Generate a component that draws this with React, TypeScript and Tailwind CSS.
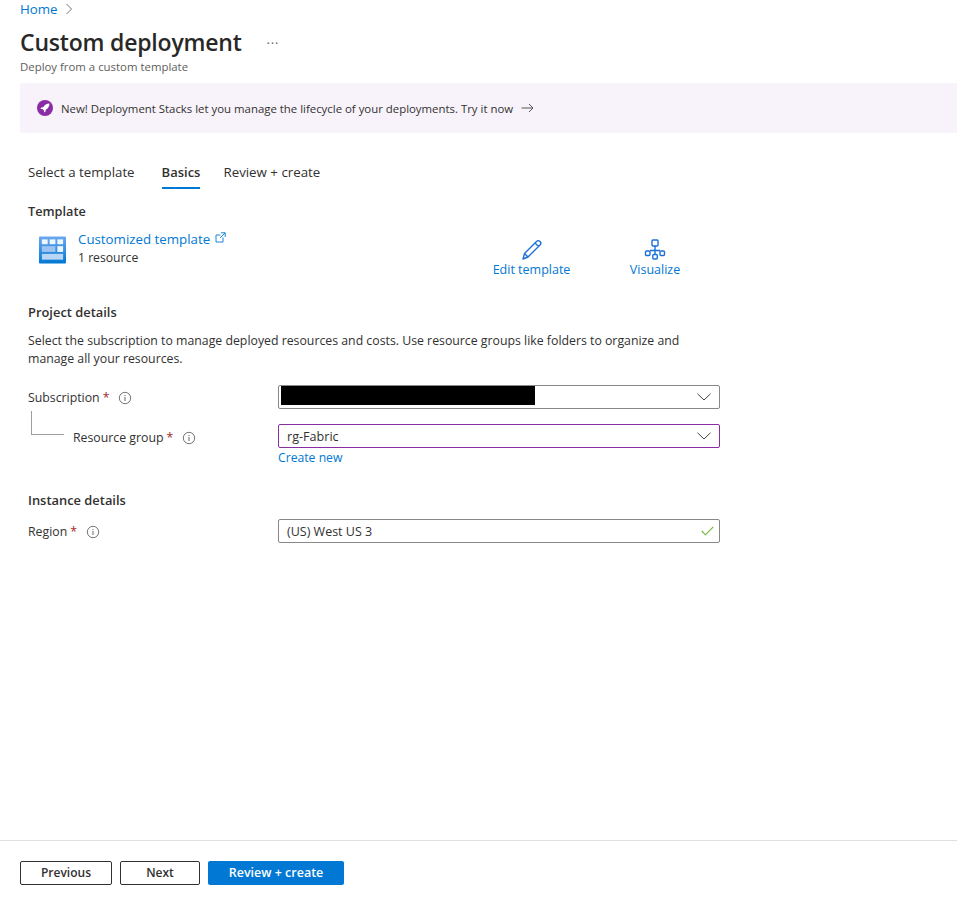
import React from 'react';

const font = { fontFamily: '"Open Sans", "Noto Sans", sans-serif' };

const InfoIcon = () => (
  <svg width="14" height="14" viewBox="0 0 14 14" fill="none">
    <circle cx="7" cy="7" r="5.7" stroke="#777" strokeWidth="1" />
    <rect x="6.5" y="6" width="1" height="4" fill="#666" />
    <rect x="6.5" y="4" width="1" height="1" fill="#666" />
  </svg>
);

const Chevron = () => (
  <svg width="14" height="8" viewBox="0 0 14 8" fill="none">
    <path d="M0.5 0.8 L7 7 L13.5 0.8" stroke="#444" strokeWidth="1" />
  </svg>
);

const Required = () => <span className="text-[#a4262c] ml-[3px]">*</span>;

const TemplateIcon = () => (
  <svg width="27" height="28" viewBox="0 0 28 28">
    <defs>
      <linearGradient id="tpl" x1="0" y1="0" x2="0" y2="1">
        <stop offset="0" stopColor="#6aa9f0" />
        <stop offset="1" stopColor="#0078d4" />
      </linearGradient>
    </defs>
    <rect x="0" y="0" width="28" height="28" rx="1" fill="url(#tpl)" />
    <rect x="3" y="3" width="6" height="5" fill="#fff" opacity="0.9" />
    <rect x="11" y="3" width="6" height="5" fill="#fff" opacity="0.9" />
    <rect x="19" y="3" width="6" height="5" fill="#fff" opacity="0.9" />
    <rect x="3" y="10" width="14" height="6" fill="#9cc3f2" />
    <rect x="19" y="10" width="6" height="6" fill="#fff" opacity="0.9" />
    <rect x="3" y="18" width="22" height="6" fill="#b9d6f5" />
  </svg>
);

const App: React.FC = () => {
  return (
    <div className="h-[900px] w-[957px] flex flex-col bg-white text-[#323130] text-[12.3px] overflow-hidden" style={font}>
      {/* Header */}
      <div className="pl-5 h-[18px] flex items-center gap-[7px]">
        <a className="text-[#0078d4] text-[13.3px] leading-[18px]">Home</a>
        <svg width="8" height="12" viewBox="0 0 8 12" fill="none">
          <path d="M1.5 1 L6.5 6 L1.5 11" stroke="#777" strokeWidth="1" />
        </svg>
      </div>
      <div className="pl-5 mt-[7px] flex items-center h-[34px]">
        <h1 className="text-[23px] font-semibold leading-[34px] text-[#292827] tracking-[-0.2px]">Custom deployment</h1>
        <span className="ml-[25px] mt-[3px] text-[#666] text-[13px] tracking-[0.8px] leading-none">···</span>
      </div>
      <div className="pl-5 text-[11.4px] leading-[16px] text-[#605e5c]">Deploy from a custom template</div>

      {/* Banner */}
      <div className="ml-5 mt-[8px] h-[50px] bg-[#f8f3fa] flex items-center pl-[17px] rounded-l-[2px]">
        <span className="w-4 h-4 rounded-full bg-[#8a2da5] flex items-center justify-center">
          <svg width="10" height="10" viewBox="0 0 10 10">
            <path d="M9.5 0.5 C6.5 0.6 4.5 2 3.2 4.2 L1.2 4.6 L0.5 6 L2.4 5.9 L4.1 7.6 L4 9.5 L5.4 8.8 L5.8 6.8 C8 5.5 9.4 3.5 9.5 0.5 Z" fill="#fff" />
          </svg>
        </span>
        <span className="ml-[8px] mt-[1px] text-[11.4px] text-[#323130]">New! Deployment Stacks let you manage the lifecycle of your deployments. Try it now</span>
        <svg className="ml-[8px]" width="13" height="10" viewBox="0 0 13 10" fill="none">
          <path d="M0.5 5 H12 M8 1 L12 5 L8 9" stroke="#555" strokeWidth="1" />
        </svg>
      </div>

      {/* Tabs */}
      <div className="pl-7 mt-[28px] flex gap-[27px] h-[28px] text-[13.3px]">
        <div className="leading-[22px]">Select a template</div>
        <div className="leading-[22px] text-[13px] font-semibold border-b-2 border-[#0078d4] h-[28px]">Basics</div>
        <div className="leading-[22px] -ml-[4px]">Review + create</div>
      </div>

      {/* Template */}
      <div className="pl-7 mt-[13px] text-[12.7px] leading-[18px] font-semibold text-[#323130]">Template</div>
      <div className="pl-7 mt-[10px] flex h-[57px]">
        <div className="ml-[11px] mt-[6px]">
          <TemplateIcon />
        </div>
        <div className="ml-[12px] w-[415px]">
          <div className="text-[#0078d4] text-[13.3px] leading-[18px] flex items-center">
            Customized template
            <svg className="ml-[5px] -mt-[3px]" width="11" height="11" viewBox="0 0 11 11" fill="none">
              <path d="M8 5.5 V10 H1 V3 H5.5 M6 0.8 H10.2 V5 M10 1 L5 6" stroke="#0078d4" strokeWidth="0.9" />
            </svg>
          </div>
          <div className="mt-[1px] leading-[18px] text-[12.2px]">1 resource</div>
        </div>
        <div className="w-[77px] flex flex-col items-center mt-[9px]">
          <svg width="22" height="22" viewBox="0 0 22 22" fill="none">
            <path d="M2 20 L3.5 14.5 L15.5 2.5 C16.5 1.5 18 1.5 19 2.5 C20 3.5 20 5 19 6 L7 18 Z M14 4 L17.5 7.5 M3.5 14.5 L7 18" stroke="#1b6fd8" strokeWidth="1.4" strokeLinejoin="round" />
          </svg>
          <span className="mt-[1px] text-[#0078d4] text-[12.5px] leading-[16px] whitespace-nowrap">Edit template</span>
        </div>
        <div className="ml-[55px] w-[60px] flex flex-col items-center mt-[9px]">
          <svg width="22" height="22" viewBox="0 0 22 22" fill="none" stroke="#1b6fd8" strokeWidth="1.4">
            <rect x="8" y="1" width="6" height="6" rx="1" />
            <rect x="1.5" y="12" width="4.5" height="4.5" rx="1" />
            <rect x="8.8" y="15.5" width="4.5" height="4.5" rx="1" />
            <rect x="16" y="12" width="4.5" height="4.5" rx="1" />
            <path d="M11 7 V15.5 M6 11.5 H16" />
          </svg>
          <span className="mt-[1px] text-[#0078d4] text-[12.5px] leading-[16px]">Visualize</span>
        </div>
      </div>

      {/* Project details */}
      <div className="pl-7 mt-[16px] text-[12.9px] leading-[18px] font-semibold">Project details</div>
      <div className="pl-7 mt-[11px] text-[12.3px] leading-[18px] w-[720px]">
        Select the subscription to manage deployed resources and costs. Use resource groups like folders to organize and manage all your resources.
      </div>

      <div className="pl-7 mt-[17px] flex h-[24px] items-center">
        <div className="w-[250px] flex items-center gap-[9px] pt-[2px]">
          <span>Subscription<Required /></span>
          <InfoIcon />
        </div>
        <div className="w-[442px] h-[24px] border border-[#8a8886] rounded-[2px] flex items-center justify-between pr-[8px]">
          <div className="ml-[2px] w-[254px] h-[19px] bg-black -mt-[3px]" />
          <Chevron />
        </div>
      </div>

      <div className="pl-7 mt-[15px] flex h-[24px] items-center relative">
        <div className="absolute left-[31px] -top-[13px] w-[33px] h-[24px] border-l border-b border-[#a19f9d]" />
        <div className="w-[250px] flex items-center gap-[9px] pl-[45px] pt-[4px]">
          <span>Resource group<Required /></span>
          <InfoIcon />
        </div>
        <div className="w-[442px] h-[24px] border border-[#8a2da5] rounded-[2px] flex items-center justify-between pl-[8px] pr-[8px]">
          <span className="mt-[2px] text-[12.6px]">rg-Fabric</span>
          <Chevron />
        </div>
      </div>
      <div className="pl-[278px] mt-[1px] text-[#0078d4] text-[12.2px] leading-[18px]">Create new</div>

      {/* Instance details */}
      <div className="pl-7 mt-[24px] text-[12.9px] leading-[18px] font-semibold">Instance details</div>
      <div className="pl-7 mt-[10px] flex h-[24px] items-center">
        <div className="w-[250px] flex items-center gap-[9px] pt-[2px]">
          <span>Region<Required /></span>
          <InfoIcon />
        </div>
        <div className="w-[442px] h-[24px] border border-[#8a8886] rounded-[2px] flex items-center justify-between pl-[8px] pr-[5px]">
          <span className="mt-[2px] text-[12.5px]">(US) West US 3</span>
          <svg width="13" height="10" viewBox="0 0 13 10" fill="none">
            <path d="M0.8 5 L4.5 8.8 L12.3 0.8" stroke="#6bb52e" strokeWidth="1.1" />
          </svg>
        </div>
      </div>

      {/* Footer */}
      <div className="mt-auto border-t border-[#e1dfdd] h-[60px] pl-5 pt-[20px] flex gap-[8px] items-start">
        <button className="w-[92px] h-[24px] border border-[#323130] rounded-[2px] font-semibold text-[12px] text-[#323130] flex items-center justify-center">Previous</button>
        <button className="w-[80px] h-[24px] border border-[#323130] rounded-[2px] font-semibold text-[12px] text-[#323130] flex items-center justify-center">Next</button>
        <button className="w-[136px] h-[24px] bg-[#0078d4] rounded-[2px] font-semibold text-[12.5px] text-white flex items-center justify-center">Review + create</button>
      </div>
    </div>
  );
};

export default App;
